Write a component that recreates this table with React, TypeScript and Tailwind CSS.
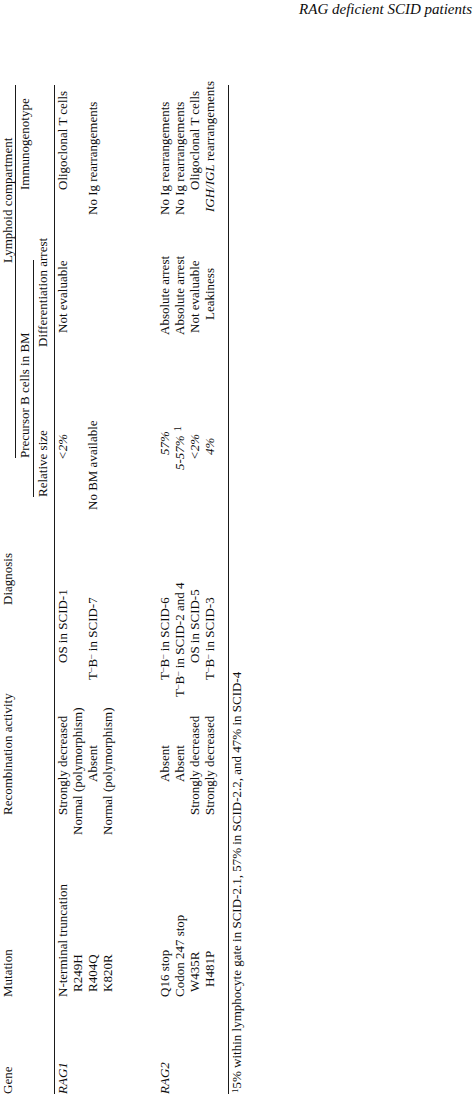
import type { ReactNode } from "react"

const GRID = "grid grid-cols-[100px_150px_150px_187px_163px_132px_130px] h-[15px] whitespace-nowrap"

type Cell = { t: ReactNode; p?: string; i?: boolean }

const TB = (n: string) => (
  <>
    T<span className="relative top-[-4px] text-[9px]">–</span>B
    <span className="relative top-[-4px] text-[9px]">–</span> in SCID-{n}
  </>
)

const rag1: Cell[][] = [
  [
    { t: "RAG1", p: "pl-[3px]", i: true },
    { t: "N-terminal truncation" },
    { t: "Strongly decreased", p: "pl-[32px]" },
    { t: "OS in SCID-1", p: "pl-[34px]" },
    { t: "<2%", p: "pl-[50px]", i: true },
    { t: "Not evaluable", p: "pl-[14px]" },
    { t: "Oligoclonal T cells", p: "pl-[25px]" },
  ],
  [{ t: "" }, { t: "R249H", p: "pl-[5px]" }, { t: "Normal (polymorphism)", p: "pl-[12px]" }],
  [
    { t: "" },
    { t: "R404Q", p: "pl-[5px]" },
    { t: "Absent", p: "pl-[65px]" },
    { t: TB("7"), p: "pl-[17px]" },
    { t: "No BM available" },
    { t: "" },
    { t: "No Ig rearrangements" },
  ],
  [{ t: "" }, { t: "K820R", p: "pl-[5px]" }, { t: "Normal (polymorphism)", p: "pl-[12px]" }],
]

const rag2: Cell[][] = [
  [
    { t: "RAG2", p: "pl-[3px]", i: true },
    { t: "Q16 stop" },
    { t: "Absent", p: "pl-[65px]" },
    { t: TB("6"), p: "pl-[17px]" },
    { t: "57%", p: "pl-[55px]", i: true },
    { t: "Absolute arrest", p: "pl-[12px]" },
    { t: "No Ig rearrangements" },
  ],
  [
    { t: "" },
    { t: "Codon 247 stop" },
    { t: "Absent", p: "pl-[65px]" },
    { t: TB("2 and 4") },
    {
      t: (
        <>
          5-57%<span className="not-italic relative top-[-3px] text-[10px] ml-[4px]">1</span>
        </>
      ),
      p: "pl-[40px]",
      i: true,
    },
    { t: "Absolute arrest", p: "pl-[12px]" },
    { t: "No Ig rearrangements" },
  ],
  [
    { t: "" },
    { t: "W435R", p: "pl-[5px]" },
    { t: "Strongly decreased", p: "pl-[32px]" },
    { t: "OS in SCID-5", p: "pl-[34px]" },
    { t: "<2%", p: "pl-[50px]", i: true },
    { t: "Not evaluable", p: "pl-[14px]" },
    { t: "Oligoclonal T cells", p: "pl-[25px]" },
  ],
  [
    { t: "" },
    { t: "H481P", p: "pl-[10px]" },
    { t: "Strongly decreased", p: "pl-[32px]" },
    { t: TB("3"), p: "pl-[17px]" },
    { t: "4%", p: "pl-[55px]", i: true },
    { t: "Leakiness", p: "pl-[27px]" },
    {
      t: (
        <>
          <span className="italic">IGH/IGL</span> rearrangements
        </>
      ),
      p: "pl-[3px]",
    },
  ],
]

function Row({ cells }: { cells: Cell[] }) {
  return (
    <div className={GRID}>
      {cells.map((c, k) => (
        <div key={k} className={`${c.p ?? ""} ${c.i ? "italic" : ""}`}>
          {c.t}
        </div>
      ))}
    </div>
  )
}

export default function App() {
  return (
    <div className="w-[474px] h-[1094px] overflow-hidden bg-white text-[#0d0d0d] font-['Liberation_Serif',serif]">
      <p className="h-[18px] pr-[2px] text-right text-[15px] leading-[18px] italic">
        RAG deficient SCID patients
      </p>

      {/* the table is printed sideways on the page */}
      <div className="mt-[1079px] w-[1012px] origin-top-left -rotate-90 text-[13px] leading-[15px]">
        {/* header */}
        <div className={GRID}>
          <div className="pl-[3px]">Gene</div>
          <div>Mutation</div>
          <div className="pl-[32px]">Recombination activity</div>
          <div className="pl-[92px]">Diagnosis</div>
          <div className="col-span-3 pl-[247px]">Lymphoid compartment</div>
        </div>
        <div className="ml-[639px] w-[373px] h-px bg-[#1a1a1a]" />
        <div className={`${GRID} mt-[1px]`}>
          <div className="col-span-4" />
          <div className="col-span-2 pl-[52px]">Precursor B cells in BM</div>
          <div className="pl-[25px]">Immunogenotype</div>
        </div>
        <div className="ml-[600px] mt-[1px] w-[237px] h-px bg-[#1a1a1a]" />
        <div className={`${GRID} mt-[1px]`}>
          <div className="col-span-4" />
          <div className="pl-[13px]">Relative size</div>
          <div>Differentiation arrest</div>
        </div>
        <div className="mt-[4px] h-px bg-[#1a1a1a]" />

        {/* body */}
        {rag1.map((r, k) => (
          <Row key={k} cells={r} />
        ))}
        <div className="h-[42px]" />
        {rag2.map((r, k) => (
          <Row key={k} cells={r} />
        ))}
        <div className="mt-[11px] h-px bg-[#1a1a1a]" />
        <p className="h-[15px] pl-[4px] whitespace-nowrap">
          <span className="relative top-[-3px] text-[9px]">1</span>5% within lymphocyte gate in SCID-2.1, 57% in
          SCID-2.2, and 47% in SCID-4
        </p>
      </div>
    </div>
  )
}
